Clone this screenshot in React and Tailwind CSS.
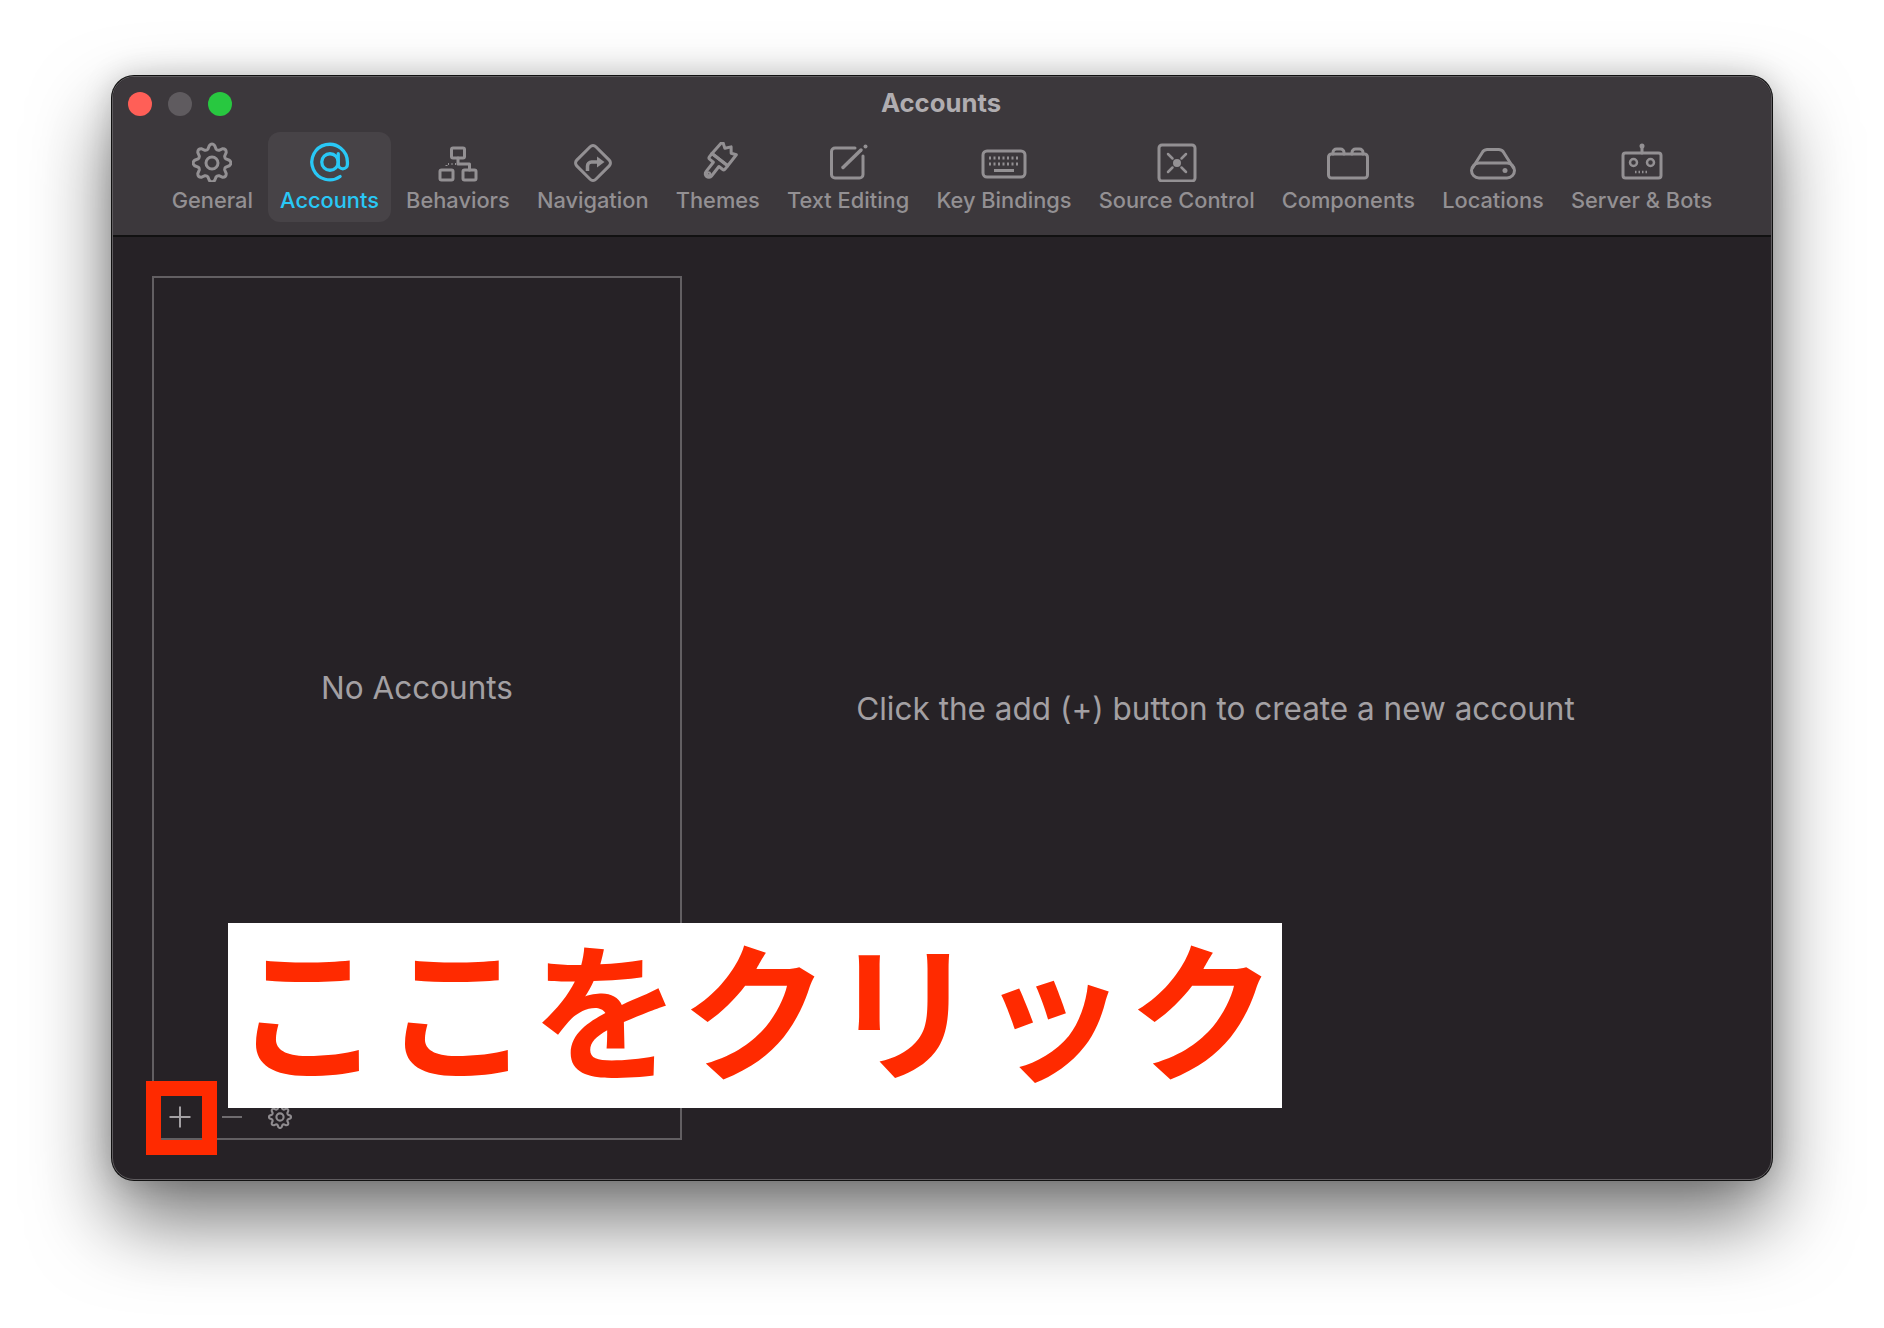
import React from "react";

// rounded gear outline, the corners are softened with quadratic curves
const gearPath = (cx, cy, outer, inner, teeth) => {
    const step = (Math.PI * 2) / teeth;
    const at = (r, a) => (cx + r * Math.cos(a)).toFixed(2) + " " + (cy + r * Math.sin(a)).toFixed(2);
    let d = "";
    for (let i = 0; i < teeth; i++) {
        const a = i * step - Math.PI / 2 - step / 2;
        d += (i === 0 ? "M" : "L") + at(inner, a + step * 0.14);
        d += "L" + at(outer - 2, a + step * 0.3);
        d += "Q" + at(outer + 1, a + step * 0.5) + " " + at(outer - 2, a + step * 0.7);
        d += "L" + at(inner, a + step * 0.86);
        d += "Q" + at(inner - 1, a + step) + " " + at(inner, a + step * 1.14);
    }
    return d + "Z";
};

const Svg = ({ children, width = 40, strokeWidth = 3 }) => (
    <svg width={width} height={40} viewBox={`0 0 ${width} 40`} fill="none" stroke="currentColor" strokeWidth={strokeWidth} strokeLinecap="round" strokeLinejoin="round">
        {children}
    </svg>
);

const GearIcon = () => (
    <Svg>
        <path d={gearPath(20, 21, 19.500, 14.500, 8)} />
        <circle cx="20" cy="21" r="6" />
    </Svg>
);

const AtIcon = () => (
    <svg width={44} height={44} viewBox="0 0 24 24" fill="none" stroke="currentColor" strokeWidth={1.8} strokeLinecap="round" strokeLinejoin="round" className="-my-[2px]">
        <circle cx="12" cy="12" r="4.500" />
        <path d="M16.500 7.500v5.700a2.500 2.500 0 0 0 5 0V12a9.700 9.700 0 1 0-4 7.900" />
    </svg>
);

const BehaviorsIcon = () => (
    <Svg>
        <rect x="13.500" y="6" width="13" height="10" rx="1.500" />
        <rect x="2" y="28" width="13" height="10" rx="1.500" />
        <rect x="25" y="28" width="13" height="10" rx="1.500" />
        <path d="M20 16v6h11.500v6" />
        <path d="M18 22H8.500v3" strokeDasharray="1 2.500" strokeWidth="2" strokeLinecap="butt" />
    </Svg>
);

const NavigationIcon = () => (
    <Svg>
        <rect x="6.500" y="7.500" width="27" height="27" rx="4" transform="rotate(45 20 21)" />
        <path d="M14.500 29v-5a4 4 0 0 1 4-4h6" strokeWidth="3.500" strokeLinecap="butt" />
        <path d="M24 14.500l7.500 5.500-7.500 5.500z" fill="currentColor" stroke="none" />
    </Svg>
);

const ThemesIcon = () => (
    <Svg>
        <g transform="rotate(38 20 20)">
            <path d="M10 17 L11 1 L17 5 L21 0 L25 5 L30 3 L30 17 Z" />
            <path d="M10 17h20v4a2 2 0 0 1-2 2h-4.500v12a3.500 3.500 0 0 1-7 0V23H12a2 2 0 0 1-2-2z" />
            <circle cx="20" cy="35" r="1" />
        </g>
    </Svg>
);

const TextEditingIcon = () => (
    <Svg>
        <path d="M27 6H7a3.500 3.500 0 0 0-3.500 3.500v23A3.500 3.500 0 0 0 7 36h24.500a3.500 3.500 0 0 0 3.500-3.500V14" />
        <path d="M15 25.500L33 8" strokeWidth="3.500" />
        <circle cx="37.500" cy="4.500" r="2" fill="currentColor" stroke="none" />
    </Svg>
);

const KeyboardIcon = () => (
    <Svg width={46}>
        <rect x="2" y="9" width="42" height="26" rx="4" />
        <path d="M8 16H38M8 22H38" strokeWidth="3" strokeDasharray="2 2.500" strokeLinecap="butt" />
        <path d="M13 28.500H33" strokeWidth="3" strokeLinecap="butt" />
    </Svg>
);

const SourceControlIcon = () => (
    <Svg>
        <rect x="2" y="3" width="36" height="36" rx="3" />
        <circle cx="20" cy="21" r="4" fill="currentColor" stroke="none" />
        <path d="M11 12l4.500 4.500M29 12l-4.500 4.500M11 30l4.500-4.500M29 30l-4.500-4.500" strokeWidth="2.500" />
    </Svg>
);

const ComponentsIcon = () => (
    <Svg width={44}>
        <rect x="2.500" y="12" width="39" height="24" rx="3" />
        <path d="M7 12v-1.500A3.500 3.500 0 0 1 10.500 7h4A3.500 3.500 0 0 1 18 10.500V12M26 12v-1.500A3.500 3.500 0 0 1 29.500 7h4a3.500 3.500 0 0 1 3.500 3.500V12" />
    </Svg>
);

const LocationsIcon = () => (
    <Svg width={48}>
        <path d="M3.500 26L13 11a6 6 0 0 1 5-3.500h12a6 6 0 0 1 5 3.500L44.500 26" />
        <rect x="2.500" y="21" width="43" height="15" rx="7.500" />
        <circle cx="36" cy="28.500" r="2.500" fill="currentColor" stroke="none" />
    </Svg>
);

const RobotIcon = () => (
    <Svg width={44}>
        <rect x="3" y="11" width="38" height="25" rx="2.500" />
        <path d="M22 5v6" />
        <circle cx="22" cy="4" r="2.500" fill="currentColor" stroke="none" />
        <circle cx="13.500" cy="20.500" r="3.500" strokeWidth="2.500" />
        <circle cx="30.500" cy="20.500" r="3.500" strokeWidth="2.500" />
        <path d="M15 30H29" strokeWidth="2.500" strokeDasharray="1.500 2" strokeLinecap="butt" />
    </Svg>
);

const tabs = [
    { label: "General", icon: <GearIcon /> },
    { label: "Accounts", icon: <AtIcon />, active: true },
    { label: "Behaviors", icon: <BehaviorsIcon /> },
    { label: "Navigation", icon: <NavigationIcon /> },
    { label: "Themes", icon: <ThemesIcon /> },
    { label: "Text Editing", icon: <TextEditingIcon /> },
    { label: "Key Bindings", icon: <KeyboardIcon /> },
    { label: "Source Control", icon: <SourceControlIcon /> },
    { label: "Components", icon: <ComponentsIcon /> },
    { label: "Locations", icon: <LocationsIcon /> },
    { label: "Server & Bots", icon: <RobotIcon /> },
];

const Tab = ({ label, icon, active }) => (
    <div className={`mx-[1.600px] flex h-[90px] flex-col items-center rounded-[12px] px-[12px] pt-[10px] ${active ? "bg-[#474347] text-[#29c8f6]" : "text-[#939093]"}`}>
        <div className="flex h-[40px] items-center justify-center">{icon}</div>
        <span className="mt-[4px] whitespace-nowrap text-[21.800px] font-[450] leading-[28px]">{label}</span>
    </div>
);

export default function App() {
    return (
        <div className="relative h-[1328px] w-[1884px] overflow-hidden bg-white pl-[112px] pt-[76px] font-['Inter','Noto_Sans_CJK_JP',sans-serif]">
            <div className="flex h-[1104px] w-[1660px] flex-col overflow-hidden rounded-[22px] border border-[#5f5c5f] bg-[#262226] shadow-[0_0_0_1px_#111,0_40px_80px_rgba(0,0,0,0.55),0_0_30px_rgba(0,0,0,0.18)]">
                <div className="h-[160px] shrink-0 border-b-2 border-[#111] bg-[#3c383c]">
                    <div className="relative flex h-[53px] items-center justify-center">
                        <div className="absolute left-[15px] top-[15px] flex gap-[16px]">
                            <span className="size-[24px] rounded-full bg-[#ff5f57]" />
                            <span className="size-[24px] rounded-full bg-[#5f5b5f]" />
                            <span className="size-[24px] rounded-full bg-[#28c840]" />
                        </div>
                        <span className="-ml-[2px] text-[25.700px] font-bold text-[#b0adb0]">Accounts</span>
                    </div>
                    <div className="mt-[2px] flex justify-center">
                        {tabs.map((t) => (
                            <Tab key={t.label} {...t} />
                        ))}
                    </div>
                </div>
                <div className="flex flex-1 pl-[39px] pt-[39px] pb-[39px]">
                    <div className="flex w-[530px] flex-col border-2 border-[#625f62]">
                        <div className="flex flex-1 items-center justify-center pt-[4px] text-[31.500px] text-[#a3a0a3]">No Accounts</div>
                        <div className="flex h-[44px] items-center pl-[14px] pt-[2px]">
                            <svg width="24" height="24" viewBox="0 0 24 24" stroke="#a3a0a3" strokeWidth="2">
                                <path d="M12 1.500V22.500M1.500 12H22.500" />
                            </svg>
                            <svg width="22" height="4" viewBox="0 0 22 4" stroke="#6f6c6f" strokeWidth="2" className="ml-[29px]">
                                <path d="M1 2H21" />
                            </svg>
                            <svg width="24" height="24" viewBox="0 0 40 40" fill="none" stroke="#8f8c8f" strokeWidth="3.500" strokeLinejoin="round" className="ml-[25px]">
                                <path d={gearPath(20, 20, 19, 14, 8)} />
                                <circle cx="20" cy="20" r="6" />
                            </svg>
                        </div>
                    </div>
                    <div className="flex flex-1 items-center justify-center pr-[22px] pt-[1px] text-[31.500px] text-[#a3a0a3]">
                        Click the add (+) button to create a new account
                    </div>
                </div>
            </div>
            <div className="absolute left-[146px] top-[1081px] h-[74px] w-[71px] border-[15px] border-[#ff2a00]" />
            <div className="absolute left-[228px] top-[923px] flex h-[185px] w-[1054px] items-center justify-center bg-white text-[149px] font-bold leading-none text-[#ff2a00]">
                ここをクリック
            </div>
        </div>
    );
}
